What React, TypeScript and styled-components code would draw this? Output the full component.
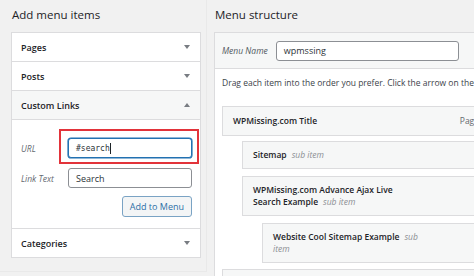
import styled, { createGlobalStyle } from "styled-components";

const GlobalStyle = createGlobalStyle`
  html, body {
    margin: 0;
    padding: 0;
  }
  body {
    background: #f1f1f1;
    font-family: "Open Sans", "Noto Sans", sans-serif;
    color: #1d2327;
    overflow: hidden;
  }
`;

const Page = styled.div`
  display: flex;
  align-items: flex-start;
  width: 474px;
  height: 276px;
  overflow: hidden;
`;

const LeftColumn = styled.div`
  flex: 0 0 207px;
  box-sizing: border-box;
  height: 272px;
  padding-left: 11px;
  border-right: 1px solid #e9e9e9;
  border-bottom: 1px solid #e9e9e9;
`;

const RightColumn = styled.div`
  flex: 0 0 320px;
  margin-left: 7px;
`;

const ColumnTitle = styled.h2`
  margin: 0;
  height: 32px;
  box-sizing: border-box;
  padding: 7px 0 0 1px;
  font-size: 11.5px;
  line-height: 16px;
  font-weight: 400;
  color: #1d2327;
`;

const Accordion = styled.div`
  width: 190px;
  box-sizing: border-box;
  background: #fff;
  border: 1px solid #dcdcde;
`;

const SectionTitle = styled.div<{ $open?: boolean; $last?: boolean }>`
  display: flex;
  align-items: center;
  justify-content: space-between;
  height: 28px;
  padding: 0 10px 0 9px;
  border-bottom: ${p => (p.$last ? "none" : "1px solid #dcdcde")};
  background: ${p => (p.$open ? "#f6f7f7" : "#fff")};
  font-size: 9px;
  font-weight: 600;
  color: #1d2327;
`;

const Arrow = styled.span<{ $up?: boolean }>`
  width: 0;
  height: 0;
  border-left: 3px solid transparent;
  border-right: 3px solid transparent;
  ${p =>
    p.$up
      ? "border-bottom: 4px solid #787c82;"
      : "border-top: 4px solid #787c82;"}
`;

const SectionBody = styled.div`
  height: 109px;
  box-sizing: border-box;
  padding: 18px 8px 0 9px;
  border-bottom: 1px solid #dcdcde;
  display: flex;
  flex-direction: column;
`;

const FieldRow = styled.div<{ $gap?: number }>`
  display: flex;
  align-items: center;
  margin-bottom: ${p => p.$gap ?? 0}px;
`;

const FieldLabel = styled.span`
  width: 47px;
  font-size: 8.5px;
  font-style: italic;
  color: #646970;
`;

const FieldWrap = styled.div`
  position: relative;
`;

const TextBox = styled.div<{ $focus?: boolean; $mono?: boolean; $width: number }>`
  display: flex;
  align-items: center;
  width: ${p => p.$width}px;
  height: 20px;
  box-sizing: border-box;
  padding: 0 7px;
  border: 1px solid ${p => (p.$focus ? "#2271b1" : "#8c8f94")};
  box-shadow: ${p => (p.$focus ? "0 0 0 0.6px #2271b1" : "none")};
  border-radius: 3px;
  background: #fff;
  font-family: ${p =>
    p.$mono ? '"DejaVu Sans Mono", "Liberation Mono", monospace' : "inherit"};
  font-size: ${p => (p.$mono ? "8px" : "9px")};
  color: #2c3338;
  white-space: nowrap;
`;

const Caret = styled.span`
  display: inline-block;
  width: 1px;
  height: 11px;
  background: #1d2327;
`;

const Highlight = styled.div`
  position: absolute;
  top: -9px;
  left: -9px;
  right: -7px;
  bottom: -6px;
  border: 2px solid #e2333a;
  pointer-events: none;
`;

const ButtonRow = styled.div`
  display: flex;
  justify-content: flex-end;
`;

const SecondaryButton = styled.button`
  height: 21px;
  padding: 0 7px;
  border: 1px solid #7aa3c4;
  border-radius: 3px;
  background: #f3f5f6;
  color: #2c6fa6;
  font-family: inherit;
  font-size: 9px;
`;

const Structure = styled.div`
  background: #fff;
  border: 1px solid #dcdcde;
  border-right: none;
  border-bottom: none;
  height: 250px;
`;

const StructureHeader = styled.div`
  display: flex;
  align-items: center;
  height: 35px;
  padding-left: 7px;
  background: #f6f7f7;
  border-bottom: 1px solid #dcdcde;
`;

const NameLabel = styled.span`
  font-size: 8.5px;
  font-style: italic;
  color: #50575e;
  margin-right: 8px;
`;

const StructureBody = styled.div`
  padding: 8px 0 0 7px;
`;

const Hint = styled.p`
  margin: 0 0 17px;
  font-size: 8.5px;
  line-height: 12px;
  color: #3c434a;
  white-space: nowrap;
`;

const MenuItem = styled.div<{ $depth: number; $top?: boolean }>`
  display: flex;
  align-items: flex-start;
  justify-content: space-between;
  width: 280px;
  box-sizing: border-box;
  margin: 0 0 ${p => (p.$top ? 5 : p.$depth === 2 ? 6 : 7)}px ${p => p.$depth * 20}px;
  padding: ${p => (p.$top ? "8px 10px 8px" : "7px 10px 7px")};
  background: #f6f7f7;
  border: 1px solid #dcdcde;
`;

const ItemTitle = styled.div`
  max-width: 150px;
  font-size: 8.5px;
  line-height: 12px;
  font-weight: 600;
  color: #1d2327;
`;

const SubLabel = styled.span`
  margin-left: 5px;
  font-weight: 400;
  font-style: italic;
  color: #8c8f94;
`;

const ItemType = styled.span`
  display: flex;
  align-items: center;
  gap: 6px;
  font-size: 8.5px;
  line-height: 12px;
  color: #646970;
  white-space: nowrap;
`;

const sections = [{ title: "Pages" }, { title: "Posts" }];

const items = [
  { title: "WPMissing.com Title", depth: 0, sub: false, type: "Page" },
  { title: "Sitemap", depth: 1, sub: true, type: "Page" },
  { title: "WPMissing.com Advance Ajax Live Search Example", depth: 1, sub: true, type: "Page" },
  { title: "Website Cool Sitemap Example", depth: 2, sub: true, type: "Page" },
  { title: "Contact", depth: 0, sub: false, type: "Page" },
];

function App() {
  return (
    <Page>
      <GlobalStyle />
      <LeftColumn>
        <ColumnTitle>Add menu items</ColumnTitle>
        <Accordion>
          {sections.map(s => (
            <SectionTitle key={s.title}>
              {s.title}
              <Arrow />
            </SectionTitle>
          ))}
          <SectionTitle $open>
            Custom Links
            <Arrow $up />
          </SectionTitle>
          <SectionBody>
            <FieldRow $gap={10}>
              <FieldLabel>URL</FieldLabel>
              <FieldWrap>
                <TextBox $focus $mono $width={124}>
                  #search
                  <Caret />
                </TextBox>
                <Highlight />
              </FieldWrap>
            </FieldRow>
            <FieldRow $gap={8}>
              <FieldLabel>Link Text</FieldLabel>
              <TextBox $width={124}>Search</TextBox>
            </FieldRow>
            <ButtonRow>
              <SecondaryButton>Add to Menu</SecondaryButton>
            </ButtonRow>
          </SectionBody>
          <SectionTitle $last>
            Categories
            <Arrow />
          </SectionTitle>
        </Accordion>
      </LeftColumn>
      <RightColumn>
        <ColumnTitle>Menu structure</ColumnTitle>
        <Structure>
          <StructureHeader>
            <NameLabel>Menu Name</NameLabel>
            <TextBox $width={183}>wpmssing</TextBox>
          </StructureHeader>
          <StructureBody>
            <Hint>
              Drag each item into the order you prefer. Click the arrow on the right of the item to reveal additional configuration options.
            </Hint>
            {items.map((item, i) => (
              <MenuItem key={item.title} $depth={item.depth} $top={i === 0}>
                <ItemTitle>
                  {item.title}
                  {item.sub && <SubLabel>sub item</SubLabel>}
                </ItemTitle>
                <ItemType>
                  {item.type}
                  <Arrow />
                </ItemType>
              </MenuItem>
            ))}
          </StructureBody>
        </Structure>
      </RightColumn>
    </Page>
  );
}

export default App;
